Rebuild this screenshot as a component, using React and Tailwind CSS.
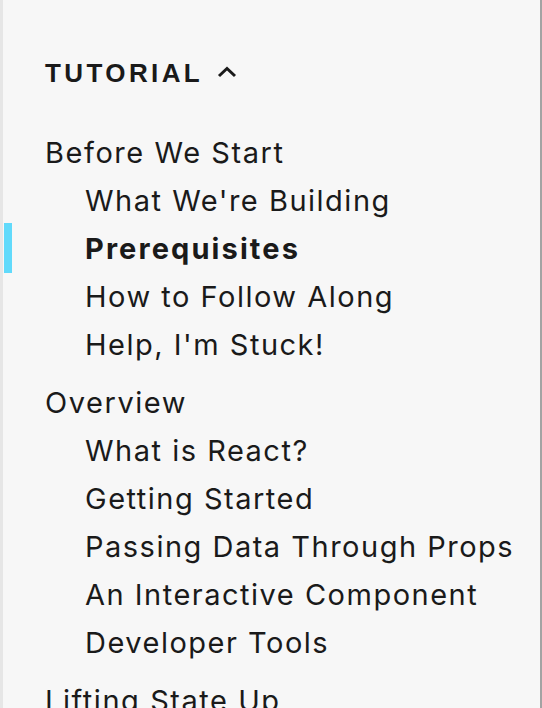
export default function App() {
  const groups = [
    { title: "Before We Start", items: ["What We're Building", "Prerequisites", "How to Follow Along", "Help, I'm Stuck!"], active: 1 },
    { title: "Overview", items: ["What is React?", "Getting Started", "Passing Data Through Props", "An Interactive Component", "Developer Tools"] },
    { title: "Lifting State Up", items: [] },
  ];
  return (
    <div className="h-[708px] w-[542px] overflow-hidden bg-[#f7f7f7] border-l-[3px] border-l-[#e6e6e6] border-r-2 border-r-[#a3a3a3] text-[#1a1a1a]" style={{ fontFamily: "Inter, 'Noto Sans', sans-serif" }}>
      <div className="pt-[59px] pl-[42px] flex items-center gap-[14px]">
        <span className="text-[26px] leading-[28px] font-bold tracking-[3.4px]" style={{ fontFamily: "'Liberation Sans', Arial, sans-serif" }}>TUTORIAL</span>
        <svg width="20" height="14" viewBox="0 0 20 14" className="mt-[-2px]">
          <path d="M2 11 L10 3.5 L18 11" fill="none" stroke="#1a1a1a" strokeWidth="3" />
        </svg>
      </div>
      <div className="mt-[41px] flex flex-col gap-[10px]">
        {groups.map((g) => (
          <div key={g.title} className="flex flex-col">
            <div className="pl-[42px] h-[48px] flex items-center text-[29px] leading-none tracking-[1.55px]">{g.title}</div>
            {g.items.map((it, i) => (
              <div key={it} className="relative h-[48px] flex items-center pl-[82px] text-[29px] leading-none tracking-[1.5px]">
                {g.active === i && <span className="absolute left-[1px] top-[-1px] w-[8px] h-[50px] bg-[#61dafb]" />}
                <span className={g.active === i ? "font-bold tracking-[2.1px]" : ""}>{it}</span>
              </div>
            ))}
          </div>
        ))}
      </div>
    </div>
  );
}
